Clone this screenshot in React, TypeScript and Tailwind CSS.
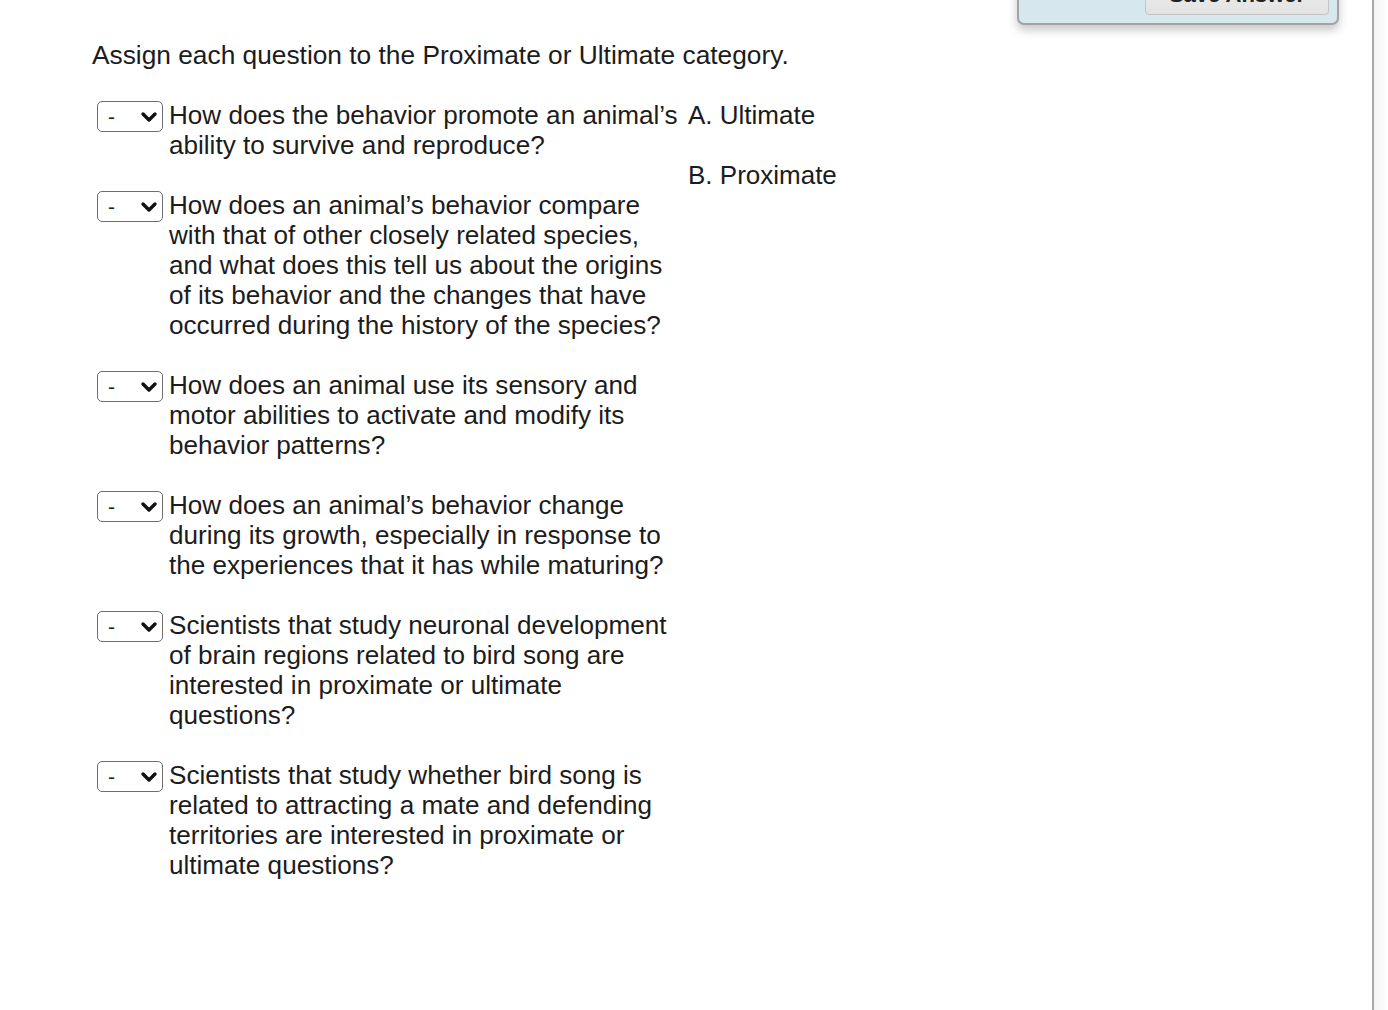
import React from "react";

const questions: string[][] = [
  ["How does the behavior promote an animal\u2019s", "ability to survive and reproduce?"],
  [
    "How does an animal\u2019s behavior compare",
    "with that of other closely related species,",
    "and what does this tell us about the origins",
    "of its behavior and the changes that have",
    "occurred during the history of the species?",
  ],
  ["How does an animal use its sensory and", "motor abilities to activate and modify its", "behavior patterns?"],
  ["How does an animal\u2019s behavior change", "during its growth, especially in response to", "the experiences that it has while maturing?"],
  [
    "Scientists that study neuronal development",
    "of brain regions related to bird song are",
    "interested in proximate or ultimate",
    "questions?",
  ],
  [
    "Scientists that study whether bird song is",
    "related to attracting a mate and defending",
    "territories are interested in proximate or",
    "ultimate questions?",
  ],
];

function Select() {
  return (
    <div className="mt-px ml-[5px] flex h-[31px] w-[66px] shrink-0 items-center justify-between rounded-[5px] border border-[#6e6e6e] bg-white pl-[10px] pr-[4px]">
      <span className="text-[21px] leading-none text-[#222]">-</span>
      <svg width="18" height="12" viewBox="0 0 18 12">
        <path d="M3 3 L9 9 L15 3" fill="none" stroke="#111" strokeWidth="3.4" strokeLinecap="round" strokeLinejoin="round" />
      </svg>
    </div>
  );
}

export default function App() {
  return (
    <div
      className="relative h-[1010px] w-[1388px] overflow-hidden bg-white text-[#1c1c1c]"
      style={{ fontFamily: '"Liberation Sans", Arial, Helvetica, sans-serif' }}
    >
      {/* right page edge */}
      <div className="absolute top-0 right-[14px] h-full w-[2px] bg-[#a9a9a9]" />
      <div className="absolute top-0 right-0 h-full w-[14px] bg-gradient-to-r from-[#f4f4f4] to-white" />

      {/* floating toolbar at top */}
      <div className="absolute left-[1017px] top-[-40px] flex h-[65px] w-[322px] items-end rounded-b-[7px] border-2 border-[#a3a3a3] bg-[#d6e8ee] pb-[8px] pl-[12px] pr-[8px] shadow-[0_5px_10px_rgba(0,0,0,0.22)]">
        <div className="flex-1 translate-y-[-17px] text-[20px] text-[#222]">Help</div>
        <div className="flex h-[40px] w-[184px] items-start justify-center overflow-hidden rounded-[4px] border border-[#c4c4c4] bg-gradient-to-b from-[#f2f2f2] to-[#e2e2e2] pt-[6px] text-[22px] leading-[26px] font-bold text-[#222]">
          Save Answer
        </div>
      </div>

      <div className="pl-[92px] pt-[40px]">
        <div className="whitespace-nowrap text-[26.3px] leading-[30px]">Assign each question to the Proximate or Ultimate category.</div>

        <div className="mt-[30px] flex">
          <div className="flex flex-col gap-[30px]">
            {questions.map((lines, i) => (
              <div key={i} className="flex">
                <Select />
                <div className="ml-[6px] w-[514px] text-[26.1px] leading-[30px]">
                  {lines.map((l, j) => (
                    <div key={j} className="whitespace-nowrap">
                      {l}
                    </div>
                  ))}
                </div>
              </div>
            ))}
          </div>
          <div className="ml-[5px] flex flex-col gap-[30px] text-[26px] leading-[30px]">
            <div className="whitespace-nowrap">A. Ultimate</div>
            <div className="whitespace-nowrap">B. Proximate</div>
          </div>
        </div>
      </div>
    </div>
  );
}
